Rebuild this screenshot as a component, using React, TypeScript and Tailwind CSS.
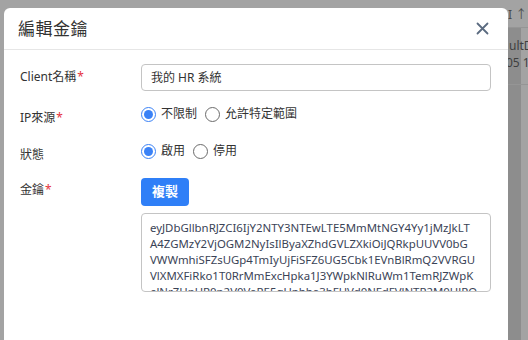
import React from 'react';

const KEY_LINES = [
  'eyJDbGllbnRJZCI6IjY2NTY3NTEwLTE5MmMtNGY4Yy1jMzJkLT',
  'A4ZGMzY2VjOGM2NyIsIlByaXZhdGVLZXkiOiJQRkpUUVV0bG',
  'VWWmhiSFZsUGp4TmIyUjFiSFZ6UG5Cbk1EVnBlRmQ2VVRGU',
  'VlXMXFiRko1T0RrMmExcHpka1J3YWpkNlRuWm1TemRJZWpK',
  'elNrZHpUR0p2V0VaRE5qUnhha3hFUVd0NFdFVlNTR2M0UlRO',
  'WXpZMk1ERXpZMkZrTVRnNE1qRTJaVEF6T1RVeFpqTTBOR1U9',
];

const Required = () => <span className="text-[#e5343d] ml-[1px]">*</span>;

const Radio = ({ checked, label }: { checked?: boolean; label: string }) => (
  <label className="flex items-center gap-[5px] cursor-pointer">
    <span
      className={`w-[15px] h-[15px] rounded-full border flex items-center justify-center bg-white ${
        checked ? 'border-[#3b82f6]' : 'border-[#6b6b6b]'
      }`}
    >
      {checked && <span className="w-[9px] h-[9px] rounded-full bg-[#3b82f6]" />}
    </span>
    <span className="text-[12px] leading-[20px] text-[#333]">{label}</span>
  </label>
);

export default function App() {
  return (
    <div
      className="relative w-[528px] h-[340px] overflow-hidden bg-[#a3a3a3]"
      style={{ fontFamily: '"Noto Sans", "Noto Sans CJK TC", sans-serif' }}
    >
      {/* page behind the overlay */}
      <div className="absolute left-[508px] top-[28px] w-[13px] bottom-0 bg-[#8d8d8d]" />
      <div className="absolute left-[508px] top-[6px] text-[12px] leading-[18px] text-[#4a4a4a] whitespace-nowrap">I ↑↓</div>
      <div className="absolute left-[508px] right-0 top-[27px] h-px bg-[#959595]" />
      <div className="absolute left-[509px] top-[37px] text-[12px] leading-[18px] text-[#3f3f3f] whitespace-nowrap">ultD</div>
      <div className="absolute left-[506px] top-[54px] text-[12px] leading-[18px] text-[#3f3f3f] whitespace-nowrap">05 1</div>
      <div className="absolute left-[508px] right-0 top-[84px] h-px bg-[#959595]" />

      {/* modal */}
      <div className="absolute left-[4px] top-[8px] w-[504px] bottom-0 bg-white rounded-t-[6px] flex flex-col">
        <div className="h-[42px] flex items-center justify-between pl-[14px] pr-[18px] border-b border-[#e6e6e6]">
          <h2 className="text-[17px] text-[#333] tracking-[0.5px]">編輯金鑰</h2>
          <svg width="13" height="13" viewBox="0 0 13 13" className="mr-[1px]">
            <path d="M1.5 1.5 L11.5 11.5 M11.5 1.5 L1.5 11.5" stroke="#5b6b80" strokeWidth="1.8" strokeLinecap="round" />
          </svg>
        </div>

        <div className="pl-[16px] pr-[17px] pt-[14px] flex flex-col">
          <div className="flex">
            <div className="w-[121px] pt-[3px] text-[12px] leading-[20px] text-[#333]">
              Client名稱<Required />
            </div>
            <div className="flex-1 h-[27px] border border-[#c4c4c4] rounded-[4px] px-[9px] flex items-center text-[12px] text-[#333]">
              我的 HR 系統
            </div>
          </div>

          <div className="flex items-start mt-[13px]">
            <div className="w-[121px] pt-[4px] text-[12px] leading-[20px] text-[#333]">
              IP來源<Required />
            </div>
            <div className="flex items-center gap-[8px]">
              <Radio checked label="不限制" />
              <Radio label="允許特定範圍" />
            </div>
          </div>

          <div className="flex items-start mt-[13px]">
            <div className="w-[121px] pt-[4px] text-[12px] leading-[20px] text-[#333]">狀態</div>
            <div className="flex items-center gap-[8px]">
              <Radio checked label="啟用" />
              <Radio label="停用" />
            </div>
          </div>

          <div className="flex mt-[13px]">
            <div className="w-[121px] pt-[2px] text-[12px] leading-[20px] text-[#333]">
              金鑰<Required />
            </div>
            <div className="flex-1 flex flex-col">
              <button className="w-[48px] h-[28px] rounded-[4px] bg-[#2f7ff7] text-white text-[13px] font-bold">
                複製
              </button>
              <textarea
                readOnly
                value={KEY_LINES.join('\n')}
                className="mt-[7px] h-[79px] resize-none overflow-hidden border border-[#c4c4c4] rounded-[4px] pl-[8px] pt-[6px] text-[11.4px] leading-[16px] text-[#3a4356] whitespace-pre outline-none"
              />
            </div>
          </div>
        </div>
      </div>
    </div>
  );
}
